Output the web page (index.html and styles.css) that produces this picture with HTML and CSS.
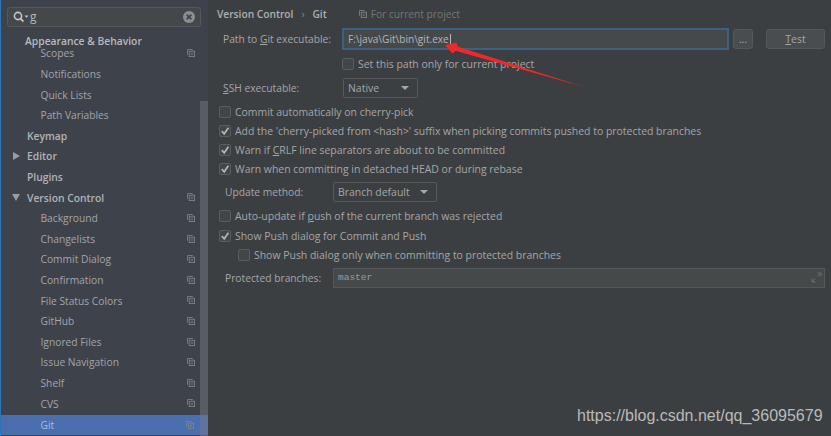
FILE: index.html
```html
<!DOCTYPE html>
<html lang="en">

<head>
    <meta charset="UTF-8">
    <title>Settings - Git</title>
    <link rel="stylesheet" href="styles.css">
</head>

<body>
    <svg width="0" height="0" class="defs">
        <symbol id="copy" viewBox="0 0 9 9">
            <path d="M0.5 6.5V0.5H6.5" fill="none" stroke="currentColor"></path>
            <rect x="2.5" y="2.5" width="6" height="6" fill="none" stroke="currentColor"></rect>
            <rect x="4" y="4" width="3" height="3" fill="currentColor" opacity="0.5"></rect>
        </symbol>
        <symbol id="tick" viewBox="0 0 12 12">
            <path d="M2.8 6.2 5.2 8.8 9.4 2.8" fill="none" stroke="currentColor" stroke-width="1.7"></path>
        </symbol>
    </svg>

    <aside class="sidebar">
        <div class="search">
            <svg class="search-icon" viewBox="0 0 16 12" width="16" height="12">
                <circle cx="5" cy="5" r="3.6" fill="none" stroke="#c4c6c8" stroke-width="1.6"></circle>
                <path d="M7.6 7.6 10.4 10.6" stroke="#c4c6c8" stroke-width="1.8"></path>
                <path d="M11.5 4.5h4l-2 2.2z" fill="#c4c6c8"></path>
            </svg>
            <span class="search-text">g</span>
            <span class="search-clear">
                <svg viewBox="0 0 12 12" width="12" height="12">
                    <circle cx="6" cy="6" r="6" fill="#8c8f91"></circle>
                    <path d="M3.6 3.6 8.4 8.4M8.4 3.6 3.6 8.4" stroke="#3f434c" stroke-width="1.6"></path>
                </svg>
            </span>
        </div>

        <div class="sticky-head">Appearance &amp; Behavior</div>

        <ul class="tree">
            <li class="node sub">Scopes<svg class="copy"><use href="#copy"></use></svg></li>
            <li class="node sub">Notifications</li>
            <li class="node sub">Quick Lists</li>
            <li class="node sub">Path Variables</li>
            <li class="node top">Keymap</li>
            <li class="node top"><i class="arrow right"></i>Editor</li>
            <li class="node top">Plugins</li>
            <li class="node top"><i class="arrow down"></i>Version Control<svg class="copy"><use href="#copy"></use></svg></li>
            <li class="node sub">Background<svg class="copy"><use href="#copy"></use></svg></li>
            <li class="node sub">Changelists<svg class="copy"><use href="#copy"></use></svg></li>
            <li class="node sub">Commit Dialog<svg class="copy"><use href="#copy"></use></svg></li>
            <li class="node sub">Confirmation<svg class="copy"><use href="#copy"></use></svg></li>
            <li class="node sub">File Status Colors<svg class="copy"><use href="#copy"></use></svg></li>
            <li class="node sub">GitHub<svg class="copy"><use href="#copy"></use></svg></li>
            <li class="node sub">Ignored Files<svg class="copy"><use href="#copy"></use></svg></li>
            <li class="node sub">Issue Navigation<svg class="copy"><use href="#copy"></use></svg></li>
            <li class="node sub">Shelf<svg class="copy"><use href="#copy"></use></svg></li>
            <li class="node sub">CVS<svg class="copy"><use href="#copy"></use></svg></li>
            <li class="node sub selected">Git<svg class="copy"><use href="#copy"></use></svg></li>
        </ul>
        <div class="scrollbar"></div>
    </aside>

    <main class="panel">
        <header class="crumbs">
            <span class="crumb">Version Control</span>
            <span class="crumb-sep">›</span>
            <span class="crumb">Git</span>
            <span class="scope"><svg class="copy"><use href="#copy"></use></svg>For current project</span>
        </header>

        <div class="row path-row">
            <label class="field-label"><span>Path to <u>G</u>it executable:</span></label>
            <div class="path-input">F:\java\Git\bin\git.exe<span class="text-cursor"></span></div>
            <button class="btn dots">...</button>
            <button class="btn test"><u>T</u>est</button>
        </div>

        <div class="row check-line path-only">
            <span class="box"></span><span>Set this path only for current project</span>
        </div>

        <div class="row ssh-row">
            <label class="field-label"><span><u>S</u>SH executable:</span></label>
            <div class="combo native">Native<i class="caret"></i></div>
        </div>

        <div class="checks first">
            <div class="check-line"><span class="box"></span><span>Commit automatically on cherry-pick</span></div>
            <div class="check-line"><span class="box"><svg><use href="#tick"></use></svg></span><span>Add the 'cherry-picked from &lt;hash&gt;' suffix when picking commits pushed to protected branches</span></div>
            <div class="check-line"><span class="box"><svg><use href="#tick"></use></svg></span><span>Warn if <u>C</u>RLF line separators are about to be committed</span></div>
            <div class="check-line"><span class="box"><svg><use href="#tick"></use></svg></span><span>Warn when committing in detached HEAD or during rebase</span></div>
        </div>

        <div class="row update-row">
            <label class="short-label">Update method:</label>
            <div class="combo branch">Branch default<i class="caret"></i></div>
        </div>

        <div class="checks second">
            <div class="check-line"><span class="box"></span><span>Auto-update if <u>p</u>ush of the current branch was rejected</span></div>
            <div class="check-line"><span class="box"><svg><use href="#tick"></use></svg></span><span>Show Push dialog for Commit and Push</span></div>
            <div class="check-line nested"><span class="box"></span><span>Show Push dialog only when committing to protected branches</span></div>
        </div>

        <div class="row protected-row">
            <label class="short-label">Protected branches:</label>
            <div class="protected-input">master
                <svg class="expand" viewBox="0 0 11 11" width="11" height="11">
                    <path d="M6.5 1H10V4.5M10 1 6.5 4.5M4.5 10H1V6.5M1 10 4.5 6.5" fill="none" stroke="#6a6e70"></path>
                </svg>
            </div>
        </div>
    </main>

    <!-- red annotation arrow drawn over the screenshot -->
    <svg class="annotation" viewBox="0 0 831 436" width="831" height="436">
        <path d="M445 45 456.5 42.8 458 46.8 586 87.5 455.5 50.8 452.5 53.5z" fill="#f0282c"></path>
    </svg>

    <div class="watermark">https://blog.csdn.net/qq_36095679</div>
</body>

</html>
```
FILE: styles.css
```css
* {
    box-sizing: border-box;
}

body {
    margin: 0;
    width: 831px;
    height: 436px;
    overflow: hidden;
    display: flex;
    position: relative;
    background: #3c3f41;
    color: #a4a6a8;
    font-family: "Open Sans", "Noto Sans", sans-serif;
    font-size: 10.45px;
}

u {
    text-underline-offset: 1px;
}

.defs {
    position: absolute;
}

.sidebar {
    position: relative;
    flex: none;
    width: 208px;
    height: 436px;
    background: #3e424b;
    border-left: 1px solid #2f74b5;
    overflow: hidden;
}

.search {
    display: flex;
    align-items: center;
    height: 20px;
    margin: 7px 0 0 6px;
    width: 194px;
    padding: 0 5px;
    background: #45484a;
    border: 1px solid #55585a;
    border-radius: 3px;
    color: #b4b6b8;
    font-size: 12px;
}

.search-icon {
    flex: none;
    margin-right: 1px;
}

.search-text {
    flex: 1;
    margin-top: -1px;
}

.search-clear {
    display: flex;
}

.sticky-head {
    position: absolute;
    left: 24px;
    top: 34px;
    font-size: 10.3px;
    font-weight: 600;
    color: #b8babc;
    line-height: 14px;
}

.tree {
    list-style: none;
    margin: 16.2px 0 0;
    padding: 0;
}

.node {
    position: relative;
    display: flex;
    align-items: center;
    height: 20.6px;
}

.node.sub {
    padding-left: 39.5px;
    font-size: 10.25px;
    color: #a2a5a9;
}

.node.top {
    padding-left: 26px;
    font-size: 10.3px;
    font-weight: 600;
    color: #b2b4b6;
}

.node.selected {
    background: #4b6eaf;
    color: #a9bcdc;
    margin-left: -1px;
    margin-top: 1px;
    padding-left: 40.5px;
}

.copy {
    width: 8px;
    height: 8px;
    color: #7f8386;
}

.node .copy {
    position: absolute;
    left: 186px;
    top: 6px;
}

.arrow {
    position: absolute;
    width: 0;
    height: 0;
}

.arrow.right {
    left: 12px;
    top: 6px;
    border-left: 7px solid #9a9c9e;
    border-top: 4px solid transparent;
    border-bottom: 4px solid transparent;
}

.arrow.down {
    left: 11px;
    top: 7px;
    border-top: 7px solid #9a9c9e;
    border-left: 4px solid transparent;
    border-right: 4px solid transparent;
}

.scrollbar {
    position: absolute;
    left: 199px;
    top: 101px;
    width: 8px;
    height: 335px;
    background: rgba(120, 124, 128, 0.45);
}

.panel {
    flex: 1;
    min-width: 0;
    padding-left: 9px;
}

.crumbs {
    display: flex;
    align-items: center;
    height: 28px;
    font-size: 10.2px;
    color: #aeb0b2;
}

.crumb {
    font-weight: 600;
}

.crumb-sep {
    margin: 0 8px;
    color: #8a8c8e;
}

.scope {
    display: flex;
    align-items: center;
    gap: 4px;
    margin-left: 32px;
    color: #747678;
}

.row {
    display: flex;
    align-items: center;
}

.field-label {
    width: 125px;
    flex: none;
    padding-left: 6px;
    font-size: 10.25px;
}

.short-label {
    width: 116px;
    flex: none;
    padding-left: 8px;
    font-size: 10.25px;
}

.path-row {
    height: 22px;
}

.path-input {
    width: 387px;
    height: 22px;
    padding-left: 4px;
    line-height: 18px;
    font-size: 10.1px;
    background: #45494a;
    border: 2px solid #3d6185;
    color: #b4b6b8;
}

.text-cursor {
    display: inline-block;
    width: 1px;
    height: 10px;
    margin-left: 1px;
    vertical-align: -1px;
    background: #b4b6b8;
}

.btn {
    height: 20px;
    padding: 0;
    background: #4a4d4f;
    border: 1px solid #55585a;
    border-radius: 3px;
    color: #a4a6a8;
    font: inherit;
}

.btn.dots {
    width: 20px;
    margin-left: 4px;
}

.btn.test {
    width: 59px;
    margin-left: 13px;
}

.ssh-row {
    height: 20px;
}

.ssh-row .combo {
    margin-left: 1px;
}

.check-line {
    display: flex;
    align-items: center;
    height: 19px;
    white-space: nowrap;
}

.check-line.path-only {
    height: 28px;
    margin-left: 125px;
}

.checks {
    margin-left: 2px;
}

.checks.first {
    margin-top: 4.5px;
}

.update-row {
    height: 27px;
}

.checks.second {
    margin-top: 1px;
}

.checks.second .check-line {
    height: 19.5px;
}

.check-line.nested {
    margin-left: 19px;
}

.box {
    flex: none;
    width: 12px;
    height: 12px;
    margin-right: 4px;
    background: #434648;
    border: 1px solid #5a5d5f;
    border-radius: 2px;
    color: #b4b6b8;
}

.box svg {
    display: block;
    width: 12px;
    height: 12px;
    margin: -1px;
}

.combo {
    position: relative;
    height: 20px;
    padding-left: 4px;
    line-height: 18px;
    background: #3c3f41;
    border: 1px solid #57595b;
    border-radius: 2px;
}

.combo.native {
    width: 75px;
}

.combo.branch {
    width: 104px;
}

.caret {
    position: absolute;
    right: 8px;
    top: 7px;
    border-top: 4px solid #a4a6a8;
    border-left: 4px solid transparent;
    border-right: 4px solid transparent;
}

.protected-row {
    height: 26px;
}

.protected-input {
    position: relative;
    width: 492px;
    height: 20px;
    padding-left: 4px;
    line-height: 18px;
    background: #45494a;
    border: 1px solid #53565a;
    font-family: "Liberation Mono", monospace;
    font-size: 9.5px;
    color: #999b9d;
}

.expand {
    position: absolute;
    right: 2px;
    top: 3px;
}

.annotation {
    position: absolute;
    left: 0;
    top: 0;
    pointer-events: none;
}

.watermark {
    position: absolute;
    left: 577px;
    top: 407px;
    font-family: "Liberation Sans", Arial, sans-serif;
    font-size: 16px;
    line-height: 18px;
    color: #b9baba;
}
```
